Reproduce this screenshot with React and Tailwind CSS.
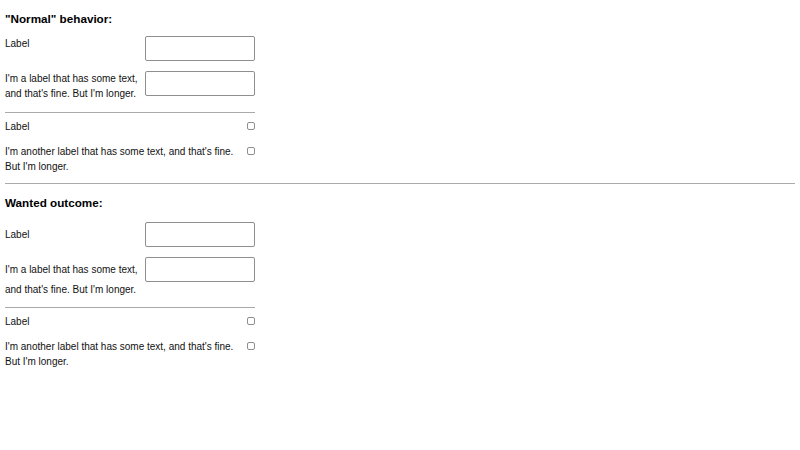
function TextBox() {
  return <div className="h-[25px] w-[110px] shrink-0 rounded-[2px] border border-[#8f8f8f] bg-white" />;
}

function Check() {
  return <div className="mt-[3px] h-[8px] w-[8px] shrink-0 rounded-[2px] border border-[#8f8f8f] bg-white" />;
}

function Heading({ children }) {
  return <h3 className="h-[16px] text-[11.7px] font-bold leading-[16px] text-black">{children}</h3>;
}

function CheckRows() {
  return (
    <div className="flex flex-col gap-[10px]">
      <div className="flex items-start justify-between">
        <span>Label</span>
        <Check />
      </div>
      <div className="flex items-start justify-between">
        <span className="w-[235px]">I'm another label that has some text, and that's fine. But I'm longer.</span>
        <Check />
      </div>
    </div>
  );
}

function Normal() {
  return (
    <section className="w-[250px]">
      <Heading>"Normal" behavior:</Heading>
      <div className="mt-[9px] flex flex-col gap-[10px]">
        <div className="flex items-start">
          <span className="w-[140px]">Label</span>
          <TextBox />
        </div>
        <div className="flex items-start">
          <span className="w-[140px]">I'm a label that has some text, and that's fine. But I'm longer.</span>
          <TextBox />
        </div>
      </div>
      <hr className="mb-[6px] mt-[11px] border-[#aaa]" />
      <CheckRows />
    </section>
  );
}

function Wanted() {
  return (
    <section className="w-[250px]">
      <Heading>Wanted outcome:</Heading>
      <div className="mt-[11px] flex flex-col gap-[10px]">
        <div className="flex items-center">
          <span className="w-[140px]">Label</span>
          <TextBox />
        </div>
        <div>
          <div className="flex items-center">
            <span className="w-[140px]">I'm a label that has some text,</span>
            <TextBox />
          </div>
          <span>and that's fine. But I'm longer.</span>
        </div>
      </div>
      <hr className="mb-[6px] mt-[10px] border-[#aaa]" />
      <CheckRows />
    </section>
  );
}

export default function App() {
  return (
    <div className="min-h-[450px] bg-white px-[5px] pt-[11px] font-['Liberation_Sans',Arial,sans-serif] text-[10px] leading-[15px] text-[#111]">
      <Normal />
      <hr className="mb-[11px] mt-[9px] border-[#aaa]" />
      <Wanted />
    </div>
  );
}
